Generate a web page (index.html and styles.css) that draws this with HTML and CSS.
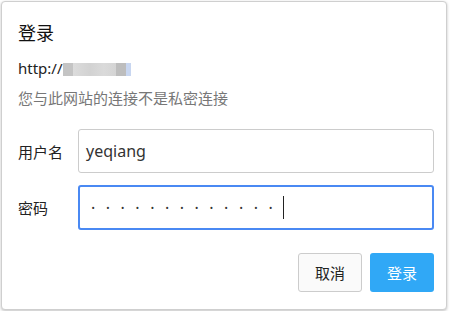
FILE: index.html
```html
<!DOCTYPE html>
<html lang="zh-CN">
<head>
    <meta charset="UTF-8">
    <meta name="viewport" content="width=device-width, initial-scale=1.0">
    <title>登录</title>
    <link rel="stylesheet" href="styles.css">
</head>

<body>
    <div class="dialog">
        <h1 class="dialog-title">登录</h1>
        <div class="site">http://<span class="site-blur"></span></div>
        <div class="warning">您与此网站的连接不是私密连接</div>

        <div class="form">
            <div class="row">
                <label class="label">用户名</label>
                <div class="field">yeqiang</div>
            </div>
            <div class="row">
                <label class="label">密码</label>
                <div class="field focused"><span class="dots">·············</span><span class="caret"></span></div>
            </div>
        </div>

        <div class="actions">
            <button type="button" class="btn">取消</button>
            <button type="button" class="btn primary">登录</button>
        </div>
    </div>
</body>
</html>
```

FILE: styles.css
```css
* {
    box-sizing: border-box;
    margin: 0;
    padding: 0;
}

body {
    font-family: "Noto Sans", "Noto Sans CJK SC", sans-serif;
    background-color: #fff;
    padding: 1px;
}

.dialog {
    width: 446px;
    height: 309px;
    background-color: #fff;
    border: 1px solid #cfcfcf;
    border-radius: 4px;
    box-shadow: 0 1px 3px rgba(0, 0, 0, 0.25);
    padding: 18px 12px 0 16px;
}

.dialog-title {
    font-size: 18px;
    font-weight: normal;
    color: #111;
    line-height: 26px;
}

.site {
    margin-top: 12px;
    font-size: 15px;
    color: #222;
    line-height: 21px;
    display: flex;
    align-items: center;
}

.site-blur {
    display: inline-block;
    width: 68px;
    height: 13px;
    margin-top: 2px;
    background: linear-gradient(90deg, #c4c4c4 0, #c4c4c4 14%, #dcdcdc 14%, #d2d2d2 40%, #dadada 60%, #d4d4d4 78%, #bdbdbd 78%, #bdbdbd 92%, #c8d6f0 92%);
}

.warning {
    margin-top: 8px;
    font-size: 15px;
    color: #777;
    line-height: 22px;
}

.form {
    margin-top: 20px;
    display: flex;
    flex-direction: column;
    gap: 12px;
}

.row {
    display: flex;
    align-items: center;
}

.label {
    width: 60px;
    font-size: 15px;
    color: #222;
}

.field {
    flex: 1;
    height: 44px;
    border: 1px solid #ccc;
    border-radius: 3px;
    padding: 0 7px;
    font-size: 16px;
    color: #333;
    display: flex;
    align-items: center;
}

.field.focused {
    height: 45px;
    border: 2px solid #4a89f3;
    padding-left: 11px;
}

.dots {
    letter-spacing: 10.5px;
    color: #333;
    font-size: 16px;
}

.caret {
    width: 1px;
    height: 23px;
    background-color: #222;
}

.actions {
    margin-top: 23px;
    display: flex;
    justify-content: flex-end;
    gap: 8px;
}

.btn {
    width: 64px;
    height: 39px;
    border: 1px solid #ccc;
    border-radius: 3px;
    background-color: #fafafa;
    color: #222;
    font-family: inherit;
    font-size: 15px;
    cursor: pointer;
}

.btn.primary {
    border: none;
    background-color: #30a8f6;
    color: #fff;
}
```
